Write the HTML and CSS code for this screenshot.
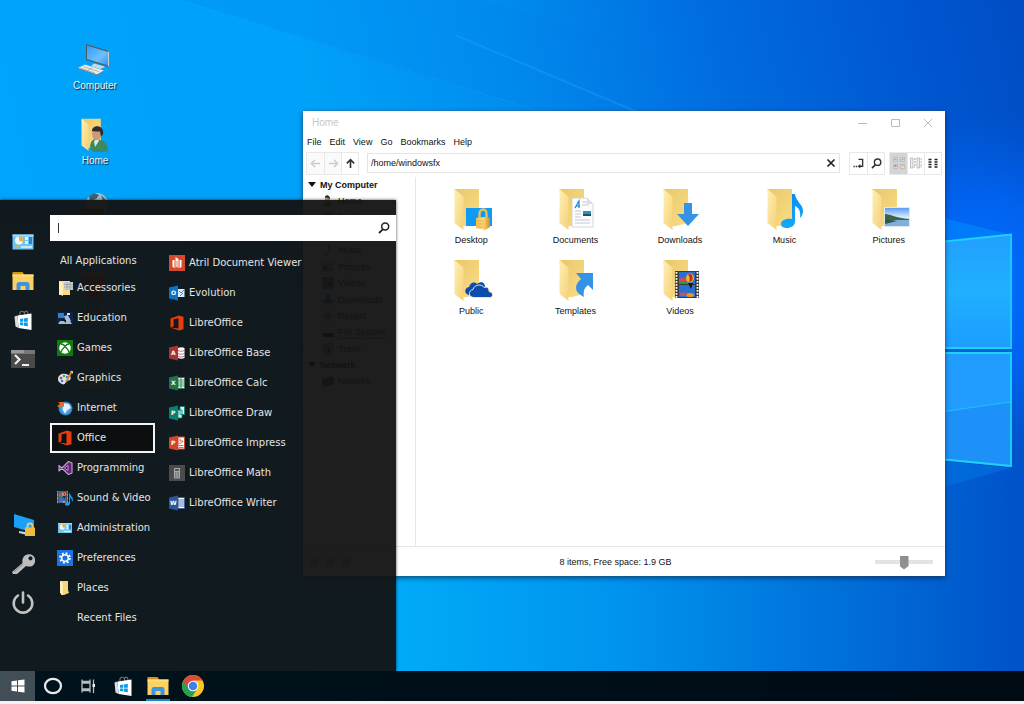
FILE: index.html
```html
<!DOCTYPE html>
<html lang="en">
<head>
<meta charset="utf-8">
<title>Desktop</title>
<link rel="stylesheet" href="styles.css">
</head>
<body>
<svg class="sprite" aria-hidden="true">
  <defs>
    <linearGradient id="gBack" x1="0" y1="0" x2="1" y2="1"><stop offset="0" stop-color="#e9c76c"/><stop offset="1" stop-color="#fbdd83"/></linearGradient>
    <linearGradient id="gFlap" x1="0" y1="0" x2="1" y2="1"><stop offset="0" stop-color="#fff0b4"/><stop offset="1" stop-color="#f5d076"/></linearGradient>
    <linearGradient id="gNote" x1="0" y1="0" x2="0" y2="1"><stop offset="0" stop-color="#0a8df8"/><stop offset="1" stop-color="#14a9fb"/></linearGradient>
    <linearGradient id="gSky" x1="0" y1="0" x2="0" y2="1"><stop offset="0" stop-color="#5f9cf6"/><stop offset=".5" stop-color="#d5ecfb"/></linearGradient>
    <linearGradient id="gLock" x1="0" y1="0" x2="1" y2="0"><stop offset="0" stop-color="#f3bb45"/><stop offset=".5" stop-color="#ffdc7c"/><stop offset="1" stop-color="#cf8c1c"/></linearGradient>
    <linearGradient id="gScreen" x1="0" y1="0" x2="1" y2="1"><stop offset="0" stop-color="#2f9df4"/><stop offset=".6" stop-color="#6cc0ff"/><stop offset="1" stop-color="#2d95ee"/></linearGradient>
    <radialGradient id="gGlobe"><stop offset="0" stop-color="#9fdcff"/><stop offset="1" stop-color="#1b7cc4"/></radialGradient>
  </defs>
  <symbol id="folder" viewBox="0 0 44 42">
    <path d="M5.500 1H30v34l-12 3H9z" fill="url(#gBack)"/>
    <path d="M5.500 1L14.500 8.500V42L5.500 35z" fill="url(#gFlap)"/>
  </symbol>
  <symbol id="person" viewBox="0 0 18 26">
    <path d="M0 20c1-5 3-7 7-8l3 2c5 0 8 5 8 11-7 2-14 2-17-1z" fill="#3c8a62"/>
    <path d="M4 15l4-3 1 3-4 6z" fill="#e9e4da"/>
    <path d="M2 6c0-4 3-5 6-5s5 3 4 7-3 6-6 6-4-4-4-8z" fill="#c79c76"/>
    <path d="M2 5C2 1 6-.500 9 .500s5 4 4 8l-2 2-1-5c-3 0-5 0-8-.5z" fill="#302b29"/>
  </symbol>
  <symbol id="lock" viewBox="0 0 14 22">
    <path d="M3.500 10V6c0-6 7-6 7 0v4" fill="none" stroke="#e8bf58" stroke-width="2.400"/>
    <path d="M0 10l9-1 5 1v9l-5 3-9-2z" fill="url(#gLock)"/>
    <path d="M2 13l6 0M2 16l6 0M2 19l6 0" stroke="#dda544" stroke-width=".7"/>
  </symbol>
  <symbol id="note" viewBox="0 0 22 36">
    <path d="M11 1h3c1 8 8 10 8 17 0 3-1 5-3 7 1-7-1-10-5-12v15c0 5-4 7-8 7-3 0-6-1-6-4s4-6 11-5z" fill="url(#gNote)"/>
  </symbol>
  <symbol id="photo" viewBox="0 0 26 20">
    <path d="M0 0h26v20H0z" fill="#dfe7ef"/><path d="M1 1h24v18H1z" fill="url(#gSky)"/>
    <path d="M1 7c5 0 11 4 24 5v1H1z" fill="#3c6446"/><path d="M1 13h24v6H1z" fill="#7fb0dc"/><path d="M1 13c6 0 8 0 12 1l-12 3z" fill="#285846"/>
  </symbol>
  <symbol id="film" viewBox="0 0 24 27">
    <path d="M0 0h24v27H0z" fill="#3b3b3b"/><path d="M4 1h16v12H4zM4 14h16v12H4z" fill="#2b6fd2"/>
    <path d="M1.500 1v26M22.500 1v26" stroke="#fff" stroke-width="1.800" stroke-dasharray="1.800 1.200"/>
    <path d="M4 8l6-2 4 7H4z" fill="#d5465a"/><path d="M4 11l8-1v3H4z" fill="#2b9a44"/>
    <ellipse cx="15" cy="7" rx="4" ry="4.500" fill="#ecb926"/><path d="M13 3c2 3 2 6 1 8l3-1c1-3 1-5-1-7z" fill="#c52a25"/>
    <path d="M13 12h5l-2 6z" fill="#181818"/><ellipse cx="15" cy="24" rx="4" ry="2" fill="#e99720"/><path d="M5 22l5-1 2 4H5z" fill="#b8537b"/>
  </symbol>
  <symbol id="magnify" viewBox="0 0 12 12">
    <circle cx="7.200" cy="4.600" r="3.500" fill="none" stroke="currentColor" stroke-width="1.500"/>
    <path d="M4.800 7.400L1 11" stroke="currentColor" stroke-width="1.800"/>
  </symbol>
  <symbol id="store" viewBox="0 0 24 24">
    <path d="M9 7c-1-5 4-5 5 0M13 5c2-3 4-2 4 1" fill="none" stroke="#6d7478" stroke-width="1.200"/>
    <path d="M6.500 7.500L20.500 5.500V22L7.500 20z" fill="#fff"/><path d="M3.500 8.500l3-1 1 12.500L4.500 18.500z" fill="#d9dfe3"/>
    <path d="M9 11l3.300-.5v3.200H9zM13 10.400l3.800-.6v3.900H13zM9 14.400h3.300v3.200L9 17.100zM13 14.400h3.800v3.900L13 17.700z" fill="#0a9be8"/>
  </symbol>
  <symbol id="explorer" viewBox="0 0 24 24">
    <path d="M1.500 3h10l2 3h-12z" fill="#d79211"/><path d="M1.500 5.500h21v15.500h-21z" fill="#fbd163"/><path d="M1.500 5.500h21v2h-21z" fill="#ffdd7e"/>
    <path d="M5.500 21v-6l1.500-2h10l1.500 2v6h-4v-4h-5v4z" fill="#3e95dc"/>
  </symbol>
  <symbol id="panel" viewBox="0 0 24 18">
    <path d="M1.500 1.500h21v15h-21z" fill="#6fc4f4"/><path d="M1.500 1.500h21v2h-21z" fill="#9edafa"/>
    <circle cx="8" cy="7.500" r="4" fill="#e9f7ff"/><path d="M8 7.500V3a4 4 0 0 1 3.500 6z" fill="#f5ae2c"/>
    <path d="M14 4h3v3h-3zM14 8h3v3h-3z" fill="#e8f6ff"/><path d="M18 4h3v7h-3z" fill="#2389cb"/>
    <path d="M4 14h5" stroke="#efad31" stroke-width="1.500"/><path d="M10 14h11" stroke="#e6f6ff" stroke-width="1.500"/>
  </symbol>
  <symbol id="office" viewBox="0 0 16 16">
    <path d="M1.500 3.500L10 .500 14.500 1.800v12.400L10 15.500 1.500 12.500l8 1V3.200L4.600 4.300v7L1.500 12.500z" fill="#e83c0d"/>
  </symbol>
  <symbol id="book" viewBox="0 0 16 16">
    <path d="M0 2.500L9 .500v15L0 13.500z" fill="currentColor"/>
  </symbol>
  <symbol id="sheet" viewBox="0 0 16 16">
    <path d="M9 2.500h6.500v11H9z" fill="#fff" stroke="currentColor" stroke-width=".8"/>
    <path d="M9 5h6M9 7h6M9 9h6M9 11h6" stroke="currentColor" stroke-width=".8"/>
  </symbol>
  <symbol id="disk" viewBox="0 0 16 16">
    <path d="M9 3c2-1 5-1 6.500 0v10c-2 1-4 1-6.500 0z" fill="#fff"/><path d="M9 5.500c2 1 4 1 6.500 0M9 8.500c2 1 4 1 6.500 0M9 11.200c2 1 4 1 6.500 0" fill="none" stroke="currentColor" stroke-width=".7"/>
  </symbol>
</svg>

<main class="desktop">
  <svg class="wallpaper" viewBox="0 0 1024 671" preserveAspectRatio="none" aria-hidden="true">
    <defs>
      <linearGradient id="base" x1="0" y1="0.150" x2="1" y2="0">
        <stop offset="0" stop-color="#00a4fb"/><stop offset=".3" stop-color="#00a1f8"/><stop offset=".5" stop-color="#008cee"/><stop offset=".7" stop-color="#006bdf"/><stop offset=".88" stop-color="#0057d1"/><stop offset="1" stop-color="#004dc5"/>
      </linearGradient>
      <linearGradient id="low" x1="0" y1="0" x2="1" y2="0">
        <stop offset=".3" stop-color="#00b4fc"/><stop offset=".6" stop-color="#0094ee"/><stop offset=".85" stop-color="#006bd6"/><stop offset="1" stop-color="#0052c8"/>
      </linearGradient>
      <linearGradient id="fade" x1="0" y1="0" x2="0" y2="1"><stop offset=".3" stop-color="#000"/><stop offset=".8" stop-color="#fff"/></linearGradient>
      <mask id="lowMask"><path d="M0 0h1024v671H0z" fill="url(#fade)"/></mask>
      <radialGradient id="glow"><stop offset="0" stop-color="#0070ff"/><stop offset=".5" stop-color="#0068fb" stop-opacity=".75"/><stop offset="1" stop-color="#0060f0" stop-opacity="0"/></radialGradient>
      <linearGradient id="pane" x1="0" y1="0" x2="0" y2="1"><stop offset="0" stop-color="#229fff"/><stop offset=".5" stop-color="#20b0ff"/><stop offset="1" stop-color="#1c9dff"/></linearGradient>
      <linearGradient id="ray" x1="0" y1="0" x2="1" y2="0"><stop offset="0" stop-color="#0078ee" stop-opacity=".2"/><stop offset="1" stop-color="#0068dc" stop-opacity="0"/></linearGradient>
    </defs>
    <path d="M0 0h1024v671H0z" fill="url(#base)"/>
    <path d="M0 0h1024v671H0z" fill="url(#low)" mask="url(#lowMask)"/>
    <path d="M180 0L700 165 945 245V130L480 0z" fill="url(#ray)"/>
    <path d="M180 0L560 118" stroke="#35b4ff" stroke-opacity=".2" fill="none"/>
    <path d="M455 35L680 130" stroke="#24a2ff" stroke-opacity=".35" stroke-width="2" fill="none"/>
    <ellipse cx="985" cy="285" rx="150" ry="170" fill="url(#glow)"/>
    <path d="M940 217l70 17.500-70 8z" fill="#0088fc" opacity=".6"/>
    <path d="M300 353h710v-6H300z" fill="#0063dd"/>
    <path d="M940 243l70-9v113l-70 1z" fill="url(#pane)"/>
    <path d="M940 353h71v114l-71-7z" fill="#219cff"/>
    <path d="M940 412l70-10v65l-70-8z" fill="#1d91f8"/>
    <path d="M940 412l70-10" stroke="#22c0ff" stroke-width="1"/>
    <path d="M940 242l71-7.500V348h-71M940 353h71v113l-71-7" fill="none" stroke="#1ed2fa" stroke-width="1.800"/>
    <path d="M940 461l70 7-70 20z" fill="#007be8" opacity=".45"/>
  </svg>

  <ul class="shortcuts">
    <li><svg class="shortcut-icon" viewBox="4 0 40 36" aria-hidden="true">
      <path d="M15 2L38 9v16L15 18z" fill="#545a60"/><path d="M16 3.500L37 10v13.500L16 17z" fill="url(#gScreen)"/><path d="M37 9.500l1 0v15l-1-.5z" fill="#ccc"/>
      <path d="M23 21.500l9 2.500 2 1-5 2-9-3z" fill="#d3d6da"/><path d="M7 26l7-3.500 19 6-7 4z" fill="#e8eaec"/><path d="M9 26l15 5M12 24.500l16 5M14 30l7-4" stroke="#9ba2a8" stroke-width=".7"/><path d="M7 26.500l19 6.500 7-4" fill="none" stroke="#78838c"/>
    </svg><span>Computer</span></li>
    <li><svg class="shortcut-icon" viewBox="4 0 40 36" aria-hidden="true"><use href="#folder" x="6" y="1" width="35" height="33"/><use href="#person" x="19" y="9" width="18" height="26"/></svg><span>Home</span></li>
    <li><svg class="shortcut-icon" viewBox="2 0 40 36" aria-hidden="true"><circle cx="24" cy="12" r="11" fill="#a8bac5"/><path d="M16 4l5-3 5 2-3 4-6 2zM28 3l5 5-3 1z" fill="#3d6276"/><path d="M8 17h23v17H8z" fill="#744"/></svg><span>Network</span></li>
    <li><svg class="shortcut-icon" viewBox="2 0 40 36" aria-hidden="true"><path d="M9 5h24l-3 28H12z" fill="#b66a51"/><path d="M9 5h24v4H9z" fill="#d09273"/></svg><span>Trash</span></li>
    <li><svg class="shortcut-icon" viewBox="0 0 40 36" aria-hidden="true"><circle cx="18" cy="15" r="10" fill="none" stroke="#c5523b" stroke-width="3"/></svg><span>Helion</span></li>
    <li><svg class="shortcut-icon" viewBox="0 0 40 36" aria-hidden="true"><path d="M19 2l8 14h6v14H2V16h9z" fill="#6b2e1b"/></svg><span>Install Windowsfx</span></li>
  </ul>

  <section class="window" aria-label="Home">
    <header class="titlebar">
      <h1>Home</h1>
      <button aria-label="Minimize"><svg viewBox="0 0 10 10"><path d="M0 5.500h9"/></svg></button>
      <button aria-label="Maximize"><svg viewBox="0 0 10 10"><path d="M.500 1.500h8v7h-8z"/></svg></button>
      <button aria-label="Close"><svg viewBox="0 0 10 10"><path d="M1 1l8 8M9 1L1 9"/></svg></button>
    </header>
    <nav class="menubar"><button>File</button><button>Edit</button><button>View</button><button>Go</button><button>Bookmarks</button><button>Help</button></nav>
    <div class="toolbar">
      <div class="group nav">
        <button aria-label="Back" disabled><svg viewBox="0 0 12 12"><path d="M11 6H2M5.500 2L1.500 6l4 4"/></svg></button>
        <button aria-label="Forward" disabled><svg viewBox="0 0 12 12"><path d="M1 6h9M6.500 2l4 4-4 4"/></svg></button>
        <button aria-label="Up"><svg viewBox="0 0 12 12"><path d="M6 11V2M2 5.800L6 1.800l4 4" stroke-width="1.800"/></svg></button>
      </div>
      <div class="path">
        <input type="text" aria-label="Location" value="/home/windowsfx">
        <button aria-label="Clear"><svg viewBox="0 0 10 10"><path d="M1.500 1.500l7 7M8.500 1.500l-7 7" stroke="#222" stroke-width="1.700"/></svg></button>
      </div>
      <div class="group">
        <button aria-label="Toggle location"><svg viewBox="0 0 12 12"><path d="M6 1.500h4.500V9H7" stroke-width="1.500"/><path d="M8 6.500v5L5 9zM.500 8.500h1.500v1.500H.500zM3 8.500h1.500v1.500H3z" fill="#333" stroke="none"/></svg></button>
        <button aria-label="Search"><svg viewBox="0 0 12 12"><use href="#magnify"/></svg></button>
      </div>
      <div class="group views">
        <button class="on" aria-label="Icon view"><svg viewBox="0 0 12 12"><path d="M.500 .500h4v4h-4zM7.500 .500h4v4h-4zM.500 7.500h4v4h-4zM7.500 7.500h4v4h-4z" fill="#dde0e3" stroke="#aaa" stroke-width=".6"/><path d="M1.500 9h2" stroke="#e46"/><path d="M8.500 9h2" stroke="#cc5"/><path d="M1.500 2.500h2" stroke="#7ae"/><path d="M8.500 2.500h2" stroke="#8a9"/></svg></button>
        <button aria-label="List view"><svg viewBox="0 0 12 12"><path d="M.500 1h2.500v10H.500zM7 1h2.500v10H7z" fill="#eee" stroke="#aaa" stroke-width=".7"/><path d="M4 2h2M4 5h2M4 8h2M10.500 2h1.500M10.500 5h1.500M10.500 8h1.500" stroke="#888" stroke-width=".8"/><path d="M4 10h1M10.500 10h1" stroke="#c66" stroke-width=".8"/></svg></button>
        <button aria-label="Compact view"><svg viewBox="0 0 12 12"><path d="M1.500 2.500h3M1.500 5h3M1.500 7.500h3M1.500 10h3M7.500 2.500h3M7.500 5h3M7.500 7.500h3M7.500 10h3" stroke-width="1.300" stroke="#222"/></svg></button>
      </div>
    </div>
    <div class="body">
      <aside class="places">
        <h2>My Computer</h2>
        <ul>
          <li><svg viewBox="0 0 12 12"><use href="#person" x="2" width="8" height="12"/></svg>Home</li>
          <li><svg viewBox="0 0 12 12"><path d="M1 2h10v8H1z" fill="#0090ee"/></svg>Desktop</li>
          <li><svg viewBox="0 0 12 12"><path d="M2 1h8v10H2z" fill="#8ab"/></svg>Documents</li>
          <li><svg viewBox="0 0 12 12"><use href="#note" x="2" width="8" height="12"/></svg>Music</li>
          <li><svg viewBox="0 0 12 12"><use href="#photo" width="12" height="12"/></svg>Pictures</li>
          <li><svg viewBox="0 0 12 12"><use href="#film" width="12" height="12"/></svg>Videos</li>
          <li><svg viewBox="0 0 12 12"><path d="M4 0h4v6h4l-6 6-6-6h4z" fill="#1677d8"/></svg>Downloads</li>
          <li><svg viewBox="0 0 12 12"><path d="M6 1l2 3 4 1-3 2v4L6 9l-4 2 1-4-3-2 4-1z" fill="#3e95dc"/></svg>Recent</li>
          <li class="current"><svg viewBox="0 0 12 12"><path d="M1 6h11v4H1z" fill="#222"/></svg><span>File System</span></li>
          <li><svg viewBox="0 0 12 12"><path d="M2 1h9v10H2z" fill="#acc" stroke="#789"/><path d="M4 9l3-5 2 5z" fill="#256"/></svg>Trash</li>
        </ul>
        <h2>Network</h2>
        <ul><li><svg viewBox="0 0 12 12"><path d="M0 4l9-3 3 2v6l-8 3-4-2z" fill="#16699e"/></svg>Network</li></ul>
      </aside>
      <ul class="files">
        <li><svg viewBox="0 0 44 42"><use href="#folder"/><path d="M17 20h26v18H17z" fill="#0f9bf3"/><use href="#lock" x="27" y="20" width="14" height="22"/></svg>Desktop</li>
        <li><svg viewBox="0 0 44 42"><use href="#folder"/><path d="M18 10h15l6 6v23H18z" fill="#fcfdfe" stroke="#c4ced6" stroke-width=".8"/><path d="M33 10v6h6z" fill="#d7dfe7"/><path d="M21 20l4-7v7M22 18h4" stroke="#1583d2" stroke-width="1.200" fill="none"/><path d="M28 14h5M28 17h7M21 23h6M21 26h6M21 29h6M21 32h15M21 35h15" stroke="#c3c9ce"/><path d="M29 23h8v5h-8z" fill="#338fc0"/><path d="M29 26h8v2h-8z" fill="#1e5264"/></svg>Documents</li>
        <li><svg viewBox="0 0 44 42"><use href="#folder"/><path d="M26 15h8v11h7L30 38 19 26h7z" fill="#3593e5"/></svg>Downloads</li>
        <li><svg viewBox="0 0 44 42"><use href="#folder"/><use href="#note" x="18" y="5" width="24" height="36"/></svg>Music</li>
        <li><svg viewBox="0 0 44 42"><use href="#folder"/><use href="#photo" x="17" y="19" width="26" height="20"/></svg>Pictures</li>
        <li><svg viewBox="0 0 44 42"><use href="#folder"/><path d="M20 36c-5-1-5-7 0-8 1-4 5-6 8-3 4-3 8-2 8 3l-14 8z" fill="#0c4cae"/><path d="M25 38.500c-6 0-6-7-1-8 1-5 9-6 11-2 4-1 5 1 5 4 5 1 4 6 1 6z" fill="#0c4cae" stroke="#fbe6a0" stroke-width="1"/></svg>Public</li>
        <li><svg viewBox="0 0 44 42"><use href="#folder"/><path d="M22 14h17v17l-5-5c-4 3-5 7-4 12-9-4-11-11-3-18z" fill="#3593e5"/></svg>Templates</li>
        <li><svg viewBox="0 0 44 42"><use href="#folder"/><use href="#film" x="17" y="12" width="24" height="27"/></svg>Videos</li>
      </ul>
    </div>
    <footer class="status">
      <div class="toggles"><i></i><i></i><i></i></div>
      <span>8 items, Free space: 1.9 GB</span>
      <input type="range" aria-label="Icon size" value="50">
    </footer>
  </section>

  <section class="start-menu" aria-label="Applications">
    <div class="rail">
      <div>
        <button aria-label="Control panel"><svg viewBox="0 0 24 18"><use href="#panel"/></svg></button>
        <button aria-label="Files"><svg viewBox="0 0 24 24"><use href="#explorer"/></svg></button>
        <button aria-label="Store"><svg viewBox="0 0 24 24"><use href="#store"/></svg></button>
        <button aria-label="Terminal"><svg viewBox="0 0 24 18"><path d="M0 0h24v18H0z" fill="#4a4a4a"/><path d="M0 0h24v4H0z" fill="#777"/><path d="M0 0h13v3H0z" fill="#999"/><path d="M4 5l4.500 4.500L4 14" fill="none" stroke="#eee" stroke-width="2.200"/><path d="M11 15h7" stroke="#eee" stroke-width="2"/></svg></button>
      </div>
      <div>
        <button aria-label="Lock screen"><svg viewBox="0 0 24 24"><path d="M3 1l20 6v13L3 14z" fill="#1aa0f4"/><path d="M8 18l6 1 2 3-8-2z" fill="#cbd4da"/><path d="M16.500 15v-2c0-3.500 5-3.500 5 0v2" fill="none" stroke="#e8d27e" stroke-width="1.700"/><path d="M14 14.500h10V23H14z" fill="#eebc42"/></svg></button>
        <button aria-label="Log out"><svg viewBox="0 0 24 24"><path fill-rule="evenodd" d="M12 6c2-5 11-5 12 1s-4 9-9 7l-9 8H2l-1-2L11.500 11q-.5-3 .5-5zm6-1a2 2 0 1 0 3 0 2 2 0 0 0-3 0z" fill="#bdbdbd"/><path d="M3 20l9-8" stroke="#777" stroke-width=".8"/></svg></button>
        <button aria-label="Power"><svg viewBox="0 0 24 24"><path d="M7 4.500a9.300 9.300 0 1 0 10 0M12 1.500v10" fill="none" stroke="#c2c2c2" stroke-width="2.600" stroke-linecap="round"/></svg></button>
      </div>
    </div>
    <div class="menu-main">
      <label class="search"><span class="caret"></span><input type="text" aria-label="Search applications"><svg viewBox="0 0 12 12"><use href="#magnify"/></svg></label>
      <div class="columns">
        <div class="list categories">
          <button class="all">All Applications</button>
          <button><svg viewBox="0 0 16 16"><path d="M2 1h11v14H2z" fill="#f8dc83"/><path d="M2 1l4 2v13l-4-2z" fill="#ffefb6"/><path d="M7 2h9v8H7z" fill="#c8cdd1"/><path d="M7 4.500h9M7 7h9M10 2v8M13 2v8" stroke="#8b949b" stroke-width=".6"/></svg>Accessories</button>
          <button><svg viewBox="0 0 16 16"><path d="M0 2h16v12H0z" fill="#0c2547"/><path d="M1 3h6v5H1z" fill="#367ec5"/><path d="M10 3h3v2h-3z" fill="#d7e6f5"/><path d="M3 11h10l2 3H1z" fill="#a9b9c5"/><path d="M7 6l4-1 3 6-5 1z" fill="#9dc0e0"/><path d="M5 9l4 1v3z" fill="#111"/></svg>Education</button>
          <button><svg viewBox="0 0 16 16"><path d="M0 0h16v16H0z" fill="#107c10"/><circle cx="8" cy="8" r="5.800" fill="#fff"/><path d="M4 12c1-3 3-4.500 4-5.500 1 1 3 2.500 4 5.500M4 4c2 0 3 1 4 2 1-1 2-2 4-2" fill="none" stroke="#107c10" stroke-width="1.300"/></svg>Games</button>
          <button><svg viewBox="0 0 16 16"><path d="M1 9c0-4 4-6 8-5s6 3 4 6c-2 1-3 0-4 2s-2 3-4 2-4-2-4-5z" fill="#d9e2ea"/><circle cx="4" cy="8" r="1.300" fill="#c43"/><circle cx="7" cy="6" r="1.300" fill="#4a4"/><circle cx="5" cy="11" r="1.300" fill="#28d"/><circle cx="10" cy="7" r="1.200" fill="#38c"/><path d="M15 1L9 12" stroke="#d8842f" stroke-width="1.800"/><path d="M13 1l3 0v3z" fill="#f4c07b"/></svg>Graphics</button>
          <button><svg viewBox="0 0 16 16"><circle cx="8.500" cy="8.500" r="7" fill="url(#gGlobe)"/><path d="M6 3l6 1 2 4-4 2-2 4-2-4z" fill="#e5f2f9"/><path d="M1 2l6 0v5L5 5.500 3 8 0 6l3-2z" fill="#ea6822"/></svg>Internet</button>
          <button class="selected"><svg viewBox="0 0 16 16"><use href="#office"/></svg>Office</button>
          <button><svg viewBox="0 0 16 16"><path d="M11.500 1.500L15 3v10l-3.500 1.500L2 5.500v5.500z" fill="#68217a" stroke="#c9a3d6" stroke-width="1.100" stroke-linejoin="round"/><path d="M11 5.500v5L7.500 8z" fill="#141b1e" stroke="#d9bce2" stroke-width=".8"/></svg>Programming</button>
          <button><svg viewBox="0 0 16 16"><use href="#film" width="11" height="14"/><use href="#note" x="8" y="3" width="8" height="13"/></svg>Sound &amp; Video</button>
          <button><svg viewBox="0 0 16 16"><use href="#panel" y="2" width="16" height="12"/></svg>Administration</button>
          <button><svg viewBox="0 0 16 16"><path d="M0 0h16v16H0z" fill="#1a73e0"/><circle cx="8" cy="8" r="4.800" fill="none" stroke="#fff" stroke-width="2" stroke-dasharray="1.900 1.870"/><circle cx="8" cy="8" r="3.300" fill="none" stroke="#fff" stroke-width="1.500"/></svg>Preferences</button>
          <button><svg viewBox="0 0 16 16"><path d="M3 1h8v9l1 3-5 2H4z" fill="#f5d57a"/><path d="M3 1l3 2v12l-3-2z" fill="#ffeeb6"/></svg>Places</button>
          <button class="plain">Recent Files</button>
        </div>
        <div class="list apps">
          <button><svg viewBox="0 0 16 16"><path d="M0 0h16v16H0z" fill="#d6492a"/><path d="M3.500 5l2 0v7l2 1.500L3.500 12zM6.500 2l3 2v9l-3-1.500zM10.500 5h2v7l-2 1z" fill="#fff"/><path d="M8 6v6" fill="none" stroke="#d6492a" stroke-width=".7"/></svg>Atril Document Viewer</button>
          <button class="outlook"><svg viewBox="0 0 16 16"><path d="M8 4h7.500v8H8z" fill="#dfeefa"/><path d="M10 6l2 2 3-3M11 11l3-3" stroke="#0a70c4" stroke-width=".8" fill="none"/><use href="#book"/><text x="2" y="10">O</text></svg>Evolution</button>
          <button><svg viewBox="0 0 16 16"><use href="#office"/></svg>LibreOffice</button>
          <button class="base"><svg viewBox="0 0 16 16"><use href="#disk"/><use href="#book"/><text x="2" y="10">A</text></svg>LibreOffice Base</button>
          <button class="calc"><svg viewBox="0 0 16 16"><use href="#sheet"/><path d="M12 2.500v11" stroke="currentColor" stroke-width=".8"/><use href="#book"/><text x="2" y="10">X</text></svg>LibreOffice Calc</button>
          <button class="draw"><svg viewBox="0 0 16 16"><path d="M11 1.500h4.500v8H11zM9 5h4v8H9z" fill="#d7f1ed" stroke="currentColor" stroke-width=".8"/><use href="#book"/><text x="2" y="10">P</text></svg>LibreOffice Draw</button>
          <button class="impress"><svg viewBox="0 0 16 16"><path d="M9 2h6.500v12H9z" fill="#fff" stroke="currentColor"/><path d="M11 3.500v2.500h3a3 3 0 0 1-4 2M10 10.500h4.500M10 12.500h4.500" fill="none" stroke="currentColor" stroke-width=".8"/><use href="#book"/><text x="2" y="10">P</text></svg>LibreOffice Impress</button>
          <button><svg viewBox="0 0 16 16"><path d="M0 0h16v16H0z" fill="#4b4b4b"/><path d="M5 3h6v10.500H5z" fill="#aaa"/><path d="M6 4h4v2H6z" fill="#555"/><path d="M6 8h4M6 10h4M6 12h4" stroke="#555" stroke-dasharray="1 .5"/></svg>LibreOffice Math</button>
          <button class="writer"><svg viewBox="0 0 16 16"><use href="#sheet"/><use href="#book"/><text x="1" y="10">W</text></svg>LibreOffice Writer</button>
        </div>
      </div>
    </div>
  </section>
</main>

<nav class="taskbar" aria-label="Taskbar">
  <button class="start" aria-label="Start"><svg viewBox="0 0 24 24"><path d="M5.500 7.200l5.500-.7v5H5.500zM12 6.300l6.500-.8v6H12zM5.500 12.500H11v5l-5.500-.7zM12 12.500h6.500v6l-6.500-.8z" fill="#fff"/></svg></button>
  <button aria-label="Search"><svg viewBox="0 0 24 24"><ellipse cx="12" cy="12" rx="8" ry="7.200" fill="none" stroke="#e8eaeb" stroke-width="2.200"/></svg></button>
  <button aria-label="Task view"><svg viewBox="0 0 24 24"><path d="M6 9h8v6H6zM6 5.500v2h8v-2M6 18.500v-2h8v2M17.500 5.500v5M17.500 13v6" fill="none" stroke="#b7bec2" stroke-width="1.300"/><path d="M16.500 10h2.500v3h-2.500z" fill="#eee"/></svg></button>
  <button aria-label="Store"><svg viewBox="0 0 24 24"><use href="#store"/></svg></button>
  <button class="running" aria-label="Files"><svg viewBox="0 0 24 24"><use href="#explorer"/></svg></button>
  <button aria-label="Chrome"><svg viewBox="0 0 24 24"><circle cx="12" cy="12" r="11" fill="#fbc724"/><path d="M12 12L2.500 6.500A11 11 0 0 0 11 23l5.500-8.500z" fill="#21a15a"/><path d="M2.500 6.500A11 11 0 0 1 21.500 6.500H12L7 14.500z" fill="#dc4a3b"/><circle cx="12" cy="12" r="5.300" fill="#fff"/><circle cx="12" cy="12" r="4.300" fill="#417fee"/></svg></button>
</nav>
</body>
</html>
```
FILE: styles.css
```css
* { box-sizing: border-box; }

body {
  margin: 0;
  min-height: 100vh;
  display: flex;
  flex-direction: column;
  background: #f1f3f4;
  font: 9px/12px "Liberation Sans", Arial, sans-serif;
  color: #111;
}

button, input {
  font: inherit;
  color: inherit;
  background: none;
  border: 0;
  padding: 0;
  margin: 0;
  border-radius: 0;
}

button, input[type="text"] { outline: 0; }
ul { list-style: none; margin: 0; padding: 0; }
h1, h2 { margin: 0; font-size: inherit; }
svg { display: block; flex: none; }
.sprite { position: absolute; width: 0; height: 0; }

.desktop {
  position: relative;
  flex: 1;
  min-height: 660px;
  overflow: hidden;
}

.wallpaper { position: absolute; inset: 0; width: 100%; height: 100%; }

/* Desktop shortcuts */
.shortcuts {
  position: absolute;
  left: 45px;
  top: 42px;
  width: 100px;
  color: #edf3f6;
  font-size: 10px;
  text-align: center;
  text-shadow: 1px 1px 1px #123;
}
.shortcuts li {
  height: 75px;
  display: flex;
  flex-direction: column;
  align-items: center;
  gap: 2px;
}
.shortcut-icon { width: 40px; height: 36px; }

/* File manager window */
.window {
  position: absolute;
  inset: 111px 79px 95px 303px;
  display: flex;
  flex-direction: column;
  background: #fff;
  box-shadow: 0 0 1px #555, 0 2px 5px rgba(0, 20, 60, .6);
}

.titlebar {
  display: flex;
  align-items: center;
  height: 23px;
  padding: 0 6px 0 9px;
  color: #c8c8c8;
}
.titlebar h1 { flex: 1; font-size: 10px; font-weight: normal; }
.titlebar button { width: 33px; display: flex; justify-content: center; }
.titlebar button:last-child { width: 22px; margin-left: 5px; }
.titlebar svg { width: 10px; height: 10px; fill: none; stroke: #bbb; }

.menubar { display: flex; gap: 8px; height: 15px; padding-left: 4px; }

.toolbar {
  display: flex;
  align-items: center;
  height: 28px;
  padding: 0 3px;
}
.group { display: flex; height: 23px; border: 1px solid #e8e8e8; }
.group button {
  width: 17px;
  display: flex;
  align-items: center;
  justify-content: center;
  color: #333;
}
.group button + button { border-left: 1px solid #e8e8e8; }
.group svg { width: 11px; height: 11px; fill: none; stroke: #333; stroke-width: 1.5px; }
.group button:disabled { background: #fafafa; }
.group button:disabled svg { stroke: #ccc; }
.views { margin-left: 4px; }
.views .on { background: #d4d4d4; }
.views svg { width: 12px; height: 12px; }
.path {
  flex: 1;
  display: flex;
  align-items: center;
  height: 20px;
  margin: 0 9px 0 8px;
  padding: 0 3px;
  border: 1px solid #e5e5e5;
}
.path input { flex: 1; min-width: 0; }
.path svg { width: 10px; height: 10px; }

.body { flex: 1; display: flex; min-height: 0; }
.places { width: 113px; border-right: 1px solid #e6e6e6; }
.places h2 {
  display: flex;
  align-items: center;
  gap: 4px;
  height: 15px;
  padding-left: 5px;
}
.places h2::before {
  content: "";
  border: 4px solid transparent;
  border-top: 5px solid #111;
  border-bottom: 0;
}
.places li {
  display: flex;
  align-items: center;
  gap: 4px;
  height: 17px;
  padding-left: 19px;
}
.places li:nth-child(even) { height: 16px; }
.places li svg { width: 12px; height: 12px; }
.current span { border-bottom: 1px solid #777; }

.files {
  flex: 1;
  display: grid;
  grid-template-columns: repeat(auto-fill, minmax(96px, 1fr));
  grid-auto-rows: 71px;
  padding: 11px 4px 0 3px;
}
.files li {
  display: flex;
  flex-direction: column;
  align-items: center;
  gap: 4px;
}
.files svg { width: 44px; height: 42px; }

.status {
  display: grid;
  grid-template-columns: 1fr auto 1fr;
  align-items: center;
  height: 30px;
  padding: 0 12px 0 3px;
  border-top: 1px solid #e6e6e6;
}
.status span { padding-right: 8px; }
.toggles { display: flex; gap: 8px; padding-left: 4px; }
.toggles i { width: 8px; height: 8px; background: #bbb; }
.status input {
  appearance: none;
  justify-self: end;
  width: 58px;
  height: 14px;
}
.status input::-webkit-slider-runnable-track { height: 4px; background: #e3e3e3; }
.status input::-webkit-slider-thumb {
  appearance: none;
  width: 9px;
  height: 14px;
  margin-top: -4px;
  background: #8f8f8f;
  clip-path: polygon(0 0, 100% 0, 100% 75%, 50% 100%, 0 75%);
}

/* Application menu */
.start-menu {
  position: absolute;
  left: 0;
  bottom: 0;
  display: flex;
  width: 396px;
  padding: 15px 0 38px;
  background: rgba(18, 18, 18, .95);
  box-shadow: 0 0 3px rgba(0, 0, 0, .7);
  color: #e4e4e4;
  font: 10px/14px "DejaVu Sans", sans-serif;
}
.rail {
  width: 50px;
  display: flex;
  flex-direction: column;
  justify-content: space-between;
  padding: 7px 0 11px;
}
.rail button {
  display: flex;
  align-items: center;
  justify-content: center;
  width: 46px;
  height: 39px;
}
.rail svg { width: 24px; }

.menu-main { flex: 1; }
.search {
  display: flex;
  align-items: center;
  height: 26px;
  padding: 0 6px 0 8px;
  background: #fff;
  color: #222;
}
.search input { flex: 1; min-width: 0; }
.search svg { width: 12px; height: 12px; }
.caret { width: 1px; height: 10px; background: #333; }

.columns { display: flex; gap: 12px; padding-top: 7px; }
.list { display: flex; flex-direction: column; }
.list button {
  display: flex;
  align-items: center;
  gap: 4px;
  height: 30px;
  padding-left: 7px;
  text-align: left;
  white-space: nowrap;
}
.list svg { width: 16px; height: 16px; }
.list text { font: bold 6px "DejaVu Sans", sans-serif; fill: #fff; }
.categories { width: 105px; }
.categories .all { height: 25px; padding-left: 10px; }
.categories .plain { padding-left: 27px; }
.categories .selected {
  border: 2px solid #f4f4f4;
  padding-left: 5px;
  background: #0c0f10;
}
.apps button { padding-left: 2px; }
.outlook svg { color: #0872c9; }
.base svg { color: #a8323a; }
.calc svg { color: #217346; }
.draw svg { color: #078272; }
.impress svg { color: #d2452a; }
.writer svg { color: #2b579a; }

/* Taskbar */
.taskbar {
  display: flex;
  height: 30px;
  margin-bottom: 3px;
  background: linear-gradient(90deg, #00131c, #000b14);
}
.taskbar button {
  display: flex;
  align-items: center;
  justify-content: center;
  width: 35px;
}
.taskbar svg { width: 24px; height: 24px; }
.taskbar .start { background: #424e55; }
.taskbar .running { background: linear-gradient(#2485cf, #2485cf) center bottom / 24px 2px no-repeat; }
```
